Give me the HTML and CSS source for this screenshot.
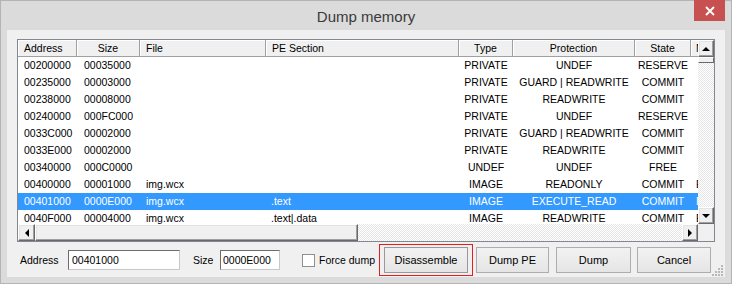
FILE: index.html
```
<!DOCTYPE html>
<html>
<head>
<meta charset="utf-8">
<link rel="stylesheet" href="styles.css">
</head>
<body>
<div class="window">
  <div class="titlebar">
    <span class="title">Dump memory</span>
    <div class="close"><svg width="10" height="10" viewBox="0 0 10 10"><path d="M1 1L9 9M9 1L1 9" stroke="#fff" stroke-width="1.8"/></svg></div>
  </div>
  <div class="client">
    <div class="listbox">
      <div class="content">
        <div class="header">
          <div class="hc left">Address</div>
          <div class="hc center">Size</div>
          <div class="hc left">File</div>
          <div class="hc left">PE Section</div>
          <div class="hc center">Type</div>
          <div class="hc center">Protection</div>
          <div class="hc center">State</div>
          <div class="hc left last">Name</div>
        </div>
        <div class="body">
          <div class="row"><span class="c1">00200000</span><span class="c2">00035000</span><span class="c3"></span><span class="c4"></span><span class="cc">PRIVATE</span><span class="cc">UNDEF</span><span class="cc">RESERVE</span><span class="c9"></span></div>
          <div class="row"><span class="c1">00235000</span><span class="c2">00003000</span><span class="c3"></span><span class="c4"></span><span class="cc">PRIVATE</span><span class="cc">GUARD | READWRITE</span><span class="cc">COMMIT</span><span class="c9"></span></div>
          <div class="row"><span class="c1">00238000</span><span class="c2">00008000</span><span class="c3"></span><span class="c4"></span><span class="cc">PRIVATE</span><span class="cc">READWRITE</span><span class="cc">COMMIT</span><span class="c9"></span></div>
          <div class="row"><span class="c1">00240000</span><span class="c2">000FC000</span><span class="c3"></span><span class="c4"></span><span class="cc">PRIVATE</span><span class="cc">UNDEF</span><span class="cc">RESERVE</span><span class="c9"></span></div>
          <div class="row"><span class="c1">0033C000</span><span class="c2">00002000</span><span class="c3"></span><span class="c4"></span><span class="cc">PRIVATE</span><span class="cc">GUARD | READWRITE</span><span class="cc">COMMIT</span><span class="c9"></span></div>
          <div class="row"><span class="c1">0033E000</span><span class="c2">00002000</span><span class="c3"></span><span class="c4"></span><span class="cc">PRIVATE</span><span class="cc">READWRITE</span><span class="cc">COMMIT</span><span class="c9"></span></div>
          <div class="row"><span class="c1">00340000</span><span class="c2">000C0000</span><span class="c3"></span><span class="c4"></span><span class="cc">UNDEF</span><span class="cc">UNDEF</span><span class="cc">FREE</span><span class="c9"></span></div>
          <div class="row"><span class="c1">00400000</span><span class="c2">00001000</span><span class="c3">img.wcx</span><span class="c4"></span><span class="cc">IMAGE</span><span class="cc">READONLY</span><span class="cc">COMMIT</span><span class="c9">Executable</span></div>
          <div class="row selected"><span class="c1">00401000</span><span class="c2">0000E000</span><span class="c3">img.wcx</span><span class="c4">.text</span><span class="cc">IMAGE</span><span class="cc">EXECUTE_READ</span><span class="cc">COMMIT</span><span class="c9">Executable</span></div>
          <div class="row"><span class="c1">0040F000</span><span class="c2">00004000</span><span class="c3">img.wcx</span><span class="c4">.text|.data</span><span class="cc">IMAGE</span><span class="cc">READWRITE</span><span class="cc">COMMIT</span><span class="c9">Executable</span></div>
        </div>
      </div>
      <div class="vscroll">
        <div class="sbtn vbtn"><span class="arr up"></span></div>
        <div class="vthumb"></div>
        <div class="track"></div>
        <div class="sbtn vbtn"><span class="arr down"></span></div>
      </div>
      <div class="hscroll">
        <div class="sbtn hbtn"><span class="arr left"></span></div>
        <div class="hthumb"></div>
        <div class="track"></div>
        <div class="sbtn hbtn rbtn"><span class="arr right"></span></div>
      </div>
      <div class="corner"></div>
    </div>
    <div class="controls">
      <span class="lbl lbl-address">Address</span>
      <input class="edit edit-address" type="text" value="00401000">
      <span class="lbl lbl-size">Size</span>
      <input class="edit edit-size" type="text" value="0000E000">
      <span class="check"></span>
      <span class="lbl lbl-force">Force dump</span>
      <div class="mark"><button class="btn btn-disasm">Disassemble</button></div>
      <button class="btn btn-dumppe">Dump PE</button>
      <button class="btn btn-dump">Dump</button>
      <button class="btn btn-cancel">Cancel</button>
    </div>
    <svg class="grip" width="12" height="12" viewBox="0 0 12 12">
      <g fill="#b8b8b8">
        <rect x="9" y="1" width="2" height="2"/>
        <rect x="6" y="4" width="2" height="2"/><rect x="9" y="4" width="2" height="2"/>
        <rect x="3" y="7" width="2" height="2"/><rect x="6" y="7" width="2" height="2"/><rect x="9" y="7" width="2" height="2"/>
        <rect x="0" y="10" width="2" height="2"/><rect x="3" y="10" width="2" height="2"/><rect x="6" y="10" width="2" height="2"/><rect x="9" y="10" width="2" height="2"/>
      </g>
    </svg>
  </div>
</div>
</body>
</html>
```
FILE: styles.css
```
* { box-sizing: border-box; }
html, body { margin: 0; padding: 0; background: #dbdbdb; }
body { font-family: "Liberation Sans", Arial, sans-serif; font-size: 10.5px; color: #000; }

.window {
  width: 732px;
  height: 284px;
  border: 1px solid #b4b4b4;
  background: #dbdbdb;
  display: flex;
  flex-direction: column;
}

.titlebar {
  position: relative;
  height: 29px;
  flex: none;
  display: flex;
  justify-content: center;
  align-items: center;
}
.title {
  font-size: 15px;
  color: #3a3a3a;
  margin-top: 1px;
}
.close {
  position: absolute;
  right: 6px;
  top: -1px;
  width: 31px;
  height: 21px;
  background: #c75050;
  display: flex;
  align-items: center;
  justify-content: center;
}

.client {
  position: relative;
  margin: 0 6px;
  height: 247px;
  flex: none;
  background: #f0f0f0;
  padding: 9px 10px 0 10px;
  display: flex;
  flex-direction: column;
}

.listbox {
  height: 203px;
  border: 1px solid #828790;
  background: #fff;
  display: grid;
  grid-template-columns: 680px 16px;
  grid-template-rows: 184px 17px;
}
.content { overflow: hidden; display: flex; flex-direction: column; }

.header {
  height: 17px;
  flex: none;
  display: grid;
  grid-template-columns: 59px 63px 126px 193px 54px 122px 56px 60px;
  background: #f0f0f0;
}
.hc {
  border-right: 1px solid #a0a0a0;
  border-bottom: 1px solid #a0a0a0;
  box-shadow: inset 1px 1px #fff;
  line-height: 16px;
  white-space: nowrap;
  overflow: hidden;
}
.hc.left { padding-left: 6px; }
.hc.center { text-align: center; }
.hc.last { padding-left: 5px; border-right: none; }

.body { overflow: hidden; flex: 1; }
.row {
  height: 17px;
  line-height: 17px;
  padding-left: 4px;
  display: grid;
  grid-template-columns: 55px 63px 126px 193px 54px 122px 56px 60px;
  white-space: nowrap;
}
.row > span { overflow: hidden; }
.row.selected { background: #3399ff; color: #fff; }
.c1 { padding-left: 2px; }
.c2 { padding-left: 7px; }
.c3 { padding-left: 6px; }
.c4 { padding-left: 5px; }
.cc { text-align: center; }
.c9 { padding-left: 5px; }

.sbtn {
  background: #f0f0f0;
  border: 1px solid;
  border-color: #fff #696969 #696969 #fff;
  box-shadow: inset -1px -1px #a0a0a0, inset 1px 1px #e3e3e3;
  display: flex;
  align-items: center;
  justify-content: center;
  flex: none;
}
.track {
  flex: 1;
  background-color: #fff;
  background-image: conic-gradient(#e6e6e6 25%, #fff 0 50%, #e6e6e6 0 75%, #fff 0);
  background-size: 2px 2px;
}

.vscroll { display: flex; flex-direction: column; grid-row: 1; grid-column: 2; }
.vbtn { height: 17px; width: 16px; }
.vthumb {
  height: 6px;
  background: #f0f0f0;
  border: 1px solid;
  border-color: #fff #696969 #696969 #fff;
  flex: none;
}

.hscroll { display: flex; grid-row: 2; grid-column: 1; }
.hbtn { width: 17px; height: 17px; }
.rbtn { width: 16px; }
.hthumb {
  width: 323px;
  flex: none;
  background: #f0f0f0;
  border: 1px solid;
  border-color: #fff #696969 #696969 #fff;
  box-shadow: inset -1px -1px #a0a0a0, inset 1px 1px #e3e3e3;
}
.corner { background: #f0f0f0; grid-row: 2; grid-column: 2; }

.arr { width: 0; height: 0; border-style: solid; }
.arr.up { border-width: 0 4px 4px 4px; border-color: transparent transparent #000 transparent; }
.arr.down { border-width: 4px 4px 0 4px; border-color: #000 transparent transparent transparent; }
.arr.left { border-width: 4px 4px 4px 0; border-color: transparent #000 transparent transparent; }
.arr.right { border-width: 4px 0 4px 4px; border-color: transparent transparent transparent #000; }

.controls {
  display: flex;
  align-items: center;
  height: 32px;
  margin-top: 2px;
}
.lbl { white-space: nowrap; flex: none; }
.lbl-address { margin-left: 3px; width: 38px; }
.edit {
  font-family: "Liberation Sans", Arial, sans-serif;
  font-size: 10.5px;
  color: #000;
  height: 20px;
  border: 1px solid;
  border-color: #6d6d6d #c8c8c8 #c8c8c8 #6d6d6d;
  background: #fff;
  padding: 0 0 0 3px;
  margin: 0;
  outline: none;
  flex: none;
}
.edit-address { margin-left: 10px; width: 112px; }
.lbl-size { margin-left: 13px; width: 18px; }
.edit-size { margin-left: 9px; width: 60px; padding-left: 2px; }
.check {
  margin-left: 22px;
  width: 13px;
  height: 13px;
  background: #fff;
  border: 1px solid #8e8f8f;
  flex: none;
}
.lbl-force { margin-left: 4px; width: 55px; }

.mark {
  margin-left: 5px;
  border: 1px solid #e02020;
  padding: 2px 4px;
  flex: none;
}
.btn {
  font-family: "Liberation Sans", Arial, sans-serif;
  font-size: 11px;
  color: #000;
  height: 26px;
  border: 1px solid #adadad;
  background: linear-gradient(#f2f2f2, #e5e5e5);
  padding: 0;
  margin: 0;
  flex: none;
}
.btn-disasm { width: 84px; border-color: #999; }
.btn-dumppe { margin-left: 3px; width: 73px; }
.btn-dump { margin-left: 7px; width: 75px; }
.btn-cancel { margin-left: 6px; width: 74px; }

.grip { position: absolute; right: 1px; bottom: 1px; }
```
